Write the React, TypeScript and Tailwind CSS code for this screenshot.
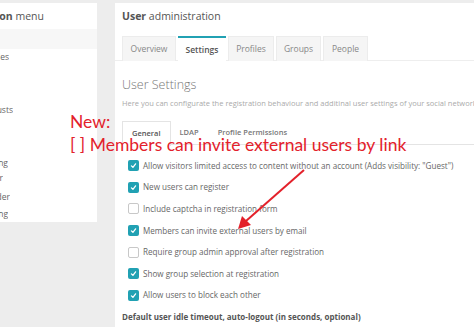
import React from 'react'

const sidebarItems = [
  { text: 'Modules', w: 'w-[9px]', mt: 'mt-[2px]' },
  { text: 'Join requsts', w: 'w-[13px]', mt: 'mt-[41px]' },
  { text: 'Logging', w: 'w-[8px]', mt: 'mt-[41px]' },
  { text: 'Spacer', w: 'w-[3px]', mt: 'mt-[3px]' },
  { text: 'Folder', w: 'w-[10px]', mt: 'mt-[7px]' },
  { text: 'Caching', w: 'w-[8px]', mt: 'mt-[5px]' },
]

const tabs = [
  { label: 'Overview', w: 'w-[54px]' },
  { label: 'Settings', w: 'w-[48px]', active: true },
  { label: 'Profiles', w: 'w-[46px]' },
  { label: 'Groups', w: 'w-[45px]' },
  { label: 'People', w: 'w-[45px]' },
]

const options = [
  { label: 'Allow visitors limited access to content without an account (Adds visibility: "Guest")', checked: true },
  { label: 'New users can register', checked: true },
  { label: 'Include captcha in registration form', checked: false },
  { label: 'Members can invite external users by email', checked: true },
  { label: 'Require group admin approval after registration', checked: false },
  { label: 'Show group selection at registration', checked: true },
  { label: 'Allow users to block each other', checked: true },
]

function Checkbox({ checked }: { checked: boolean }) {
  if (!checked) {
    return <div className="w-[11px] h-[11px] rounded-[2px] border border-[#c8c8c8] bg-white shrink-0" />
  }
  return (
    <div className="w-[11px] h-[11px] rounded-[2px] bg-[#21a1b3] shrink-0 flex items-center justify-center">
      <svg width="7" height="7" viewBox="0 0 10 10">
        <path d="M2 5.5 L4.2 7.6 L8 2.6" fill="none" stroke="white" strokeWidth="1.8" strokeLinecap="round" strokeLinejoin="round" />
      </svg>
    </div>
  )
}

export default function App() {
  return (
    <div className="relative w-[474px] h-[327px] overflow-hidden bg-[#ededed] flex items-start pt-[3px] font-['Open_Sans',sans-serif] text-[#555]">
      {/* sidebar, cut off on the left */}
      <div className="w-[97px] h-[219px] bg-white shrink-0">
        <div className="mt-[7px] h-[12px] w-[44px] overflow-hidden flex justify-end items-center">
          <span className="whitespace-nowrap text-[10.5px] leading-[12px] text-[#555]">
            <span className="font-bold">Administration</span> menu
          </span>
        </div>
        <div className="mt-[7px] h-[20px] bg-[#f7f7f7]" />
        {sidebarItems.map((item) => (
          <div key={item.text} className={`${item.mt} ${item.w} h-[12px] overflow-hidden flex justify-end items-center`}>
            <span className="whitespace-nowrap text-[8.5px] leading-[12px] text-[#666]">{item.text}</span>
          </div>
        ))}
      </div>

      {/* main panel */}
      <div className="ml-[18px] flex-1 h-[324px] bg-white">
        <div className="pl-[7px] pt-[7px] text-[10.5px] leading-[12px] text-[#555]">
          <span className="font-bold">User</span> administration
        </div>

        <div className="mt-[14px] flex gap-[2px] pl-[7px] border-b border-[#eeeeee] h-[25px]">
          {tabs.map((tab) =>
            tab.active ? (
              <div
                key={tab.label}
                className={`${tab.w} h-[26px] bg-white border-t-2 border-[#21a1b3] flex items-center justify-center text-[8.5px] font-semibold text-[#555]`}
              >
                {tab.label}
              </div>
            ) : (
              <div
                key={tab.label}
                className={`${tab.w} h-[25px] bg-[#f5f5f5] border border-b-0 border-[#ececec] flex items-center justify-center text-[8.5px] text-[#888]`}
              >
                {tab.label}
              </div>
            )
          )}
        </div>

        <div className="pl-[7px] mt-[16px] text-[12.5px] leading-[16px] font-light text-[#777]">User Settings</div>
        <div className="pl-[7px] mt-[5px] text-[7.5px] leading-[10px] text-[#aaa] whitespace-nowrap">
          Here you can configurate the registration behaviour and additinal user settings of your social network
        </div>

        <div className="ml-[7px] mt-[13px] flex border-b border-[#e4e4e4] h-[24px]">
          <div className="h-[25px] px-[9px] bg-white border border-b-0 border-[#e4e4e4] flex items-center text-[7.5px] font-semibold text-[#555]">
            General
          </div>
          <div className="h-[24px] px-[9px] flex items-center text-[7.5px] font-semibold text-[#777]">LDAP</div>
          <div className="h-[24px] px-[10px] flex items-center text-[7.5px] font-semibold text-[#777]">Profile Permissions</div>
        </div>

        <div className="mt-[10px] pl-[13px]">
          {options.map((opt) => (
            <div key={opt.label} className="h-[21.6px] flex items-center gap-[4px]">
              <Checkbox checked={opt.checked} />
              <span className="text-[8.1px] leading-[10px] text-[#666] whitespace-nowrap">{opt.label}</span>
            </div>
          ))}
        </div>

        <div className="pl-[7px] mt-[5px] text-[8px] leading-[11px] font-bold text-[#555] whitespace-nowrap">
          Default user idle timeout, auto-logout (in seconds, optional)
        </div>
      </div>

      {/* annotation overlay */}
      <div className="absolute left-[70px] top-[110px] text-[#e3212b] font-['Lato',sans-serif] text-[17.5px] leading-[23px]">
        <div>New:</div>
        <div className="whitespace-nowrap">[ ] Members can invite external users by link</div>
      </div>
      <svg className="absolute left-0 top-0" width="474" height="327" viewBox="0 0 474 327">
        <line x1="304" y1="170" x2="246" y2="221" stroke="#e3212b" strokeWidth="2" />
        <polygon points="238,229 242,216 251,225" fill="#e3212b" />
      </svg>
    </div>
  )
}
